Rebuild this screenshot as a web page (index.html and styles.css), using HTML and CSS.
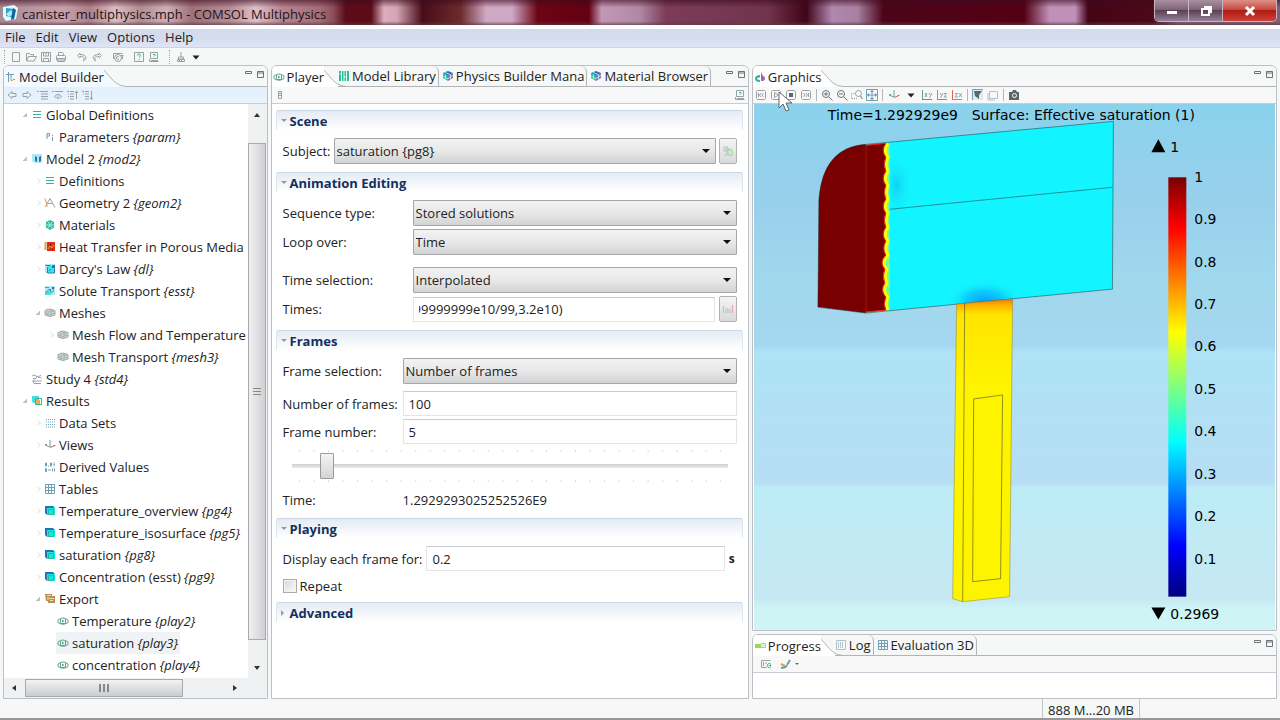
FILE: index.html
```html
<!DOCTYPE html>
<html lang="en">
<head>
    <meta charset="utf-8">
    <title>canister_multiphysics.mph - COMSOL Multiphysics</title>
    <link rel="stylesheet" href="styles.css">
</head>
<body>
    <!-- Icon set -->
    <svg class="sprite" aria-hidden="true">
        <symbol id="i-new" viewBox="0 0 12 12"><path d="M2.500 1.500h7v9h-7z"/></symbol>
        <symbol id="i-open" viewBox="0 0 12 12"><path d="M1.500 10V2.500h3l1 1h3v2M1.500 10l2-4.500h8l-2.500 4.500z"/></symbol>
        <symbol id="i-save" viewBox="0 0 12 12"><path d="M1.500 1.500h9v9h-9zM3.500 1.500v3.500h5v-3.500M3.500 10.500v-3h5v3M6 2v2"/></symbol>
        <symbol id="i-print" viewBox="0 0 12 12"><path d="M3.500 5V1.500h4l1 1V5M1.500 5.500q0-1 1-1h7q1 0 1 1v3.500h-9zM2.500 9v1.500h7V9M1.500 7.500h9"/></symbol>
        <symbol id="i-undo" viewBox="0 0 12 12"><path d="M4 2L1.500 4.500 4 7V5.500c4-.5 5 1 3.500 4.500 4-3 3-6.500-3.500-6.500z"/></symbol>
        <symbol id="i-redo" viewBox="0 0 12 12"><path d="M8 2l2.500 2.500L8 7V5.500c-4-.5-5 1-3.500 4.500-4-3-3-6.500 3.500-6.500z"/></symbol>
        <symbol id="i-refresh" viewBox="0 0 12 12"><path d="M1.500 8V2.500h9M8.500 4.500h3M10.500 4v4"/><circle cx="6" cy="7" r="3.500"/><path d="M7 6a1.500 1.500 0 1 0 0 2"/></symbol>
        <symbol id="i-help" viewBox="0 0 12 12"><path d="M1.500 1.500h9v9h-9z"/><path class="teal" d="M4.500 4.500q0-1.500 1.500-1.500t1.500 1.500q0 1-1.500 2M6 8v1"/></symbol>
        <symbol id="i-doc" viewBox="0 0 12 12"><path d="M2.500 1.500h7v6h-7zM1.500 8v2.500h9M3 9.500h7"/><path class="teal" d="M5 3.500h2v1L6 5.500"/></symbol>
        <symbol id="i-brush" viewBox="0 0 12 12"><path d="M6 1v5M3.500 6h5v2h-5zM2.500 8.500h7v2h-7zM4.500 8.500v1.500M6.500 8.500v1.500"/></symbol>
        <symbol id="i-caret" viewBox="0 0 12 12"><path class="black" d="M2.500 4.500h7L6 8.500z"/></symbol>
        <symbol id="i-back" viewBox="0 0 12 12"><path d="M6 2.500L2 6l4 3.500V7.500h4v-3H6z"/></symbol>
        <symbol id="i-fwd" viewBox="0 0 12 12"><path d="M6 2.500L10 6 6 9.500V7.500H2v-3h4z"/></symbol>
        <symbol id="i-list" viewBox="0 0 12 12"><path d="M1 2.500h2M4 2.500h8M5 5h7M5 7.500h7M5 10h7"/></symbol>
        <symbol id="i-show" viewBox="0 0 12 12"><path d="M1 2.500h2M4 2.500h8M3.500 7.500q3.500-4 7 0-3.500 3.500-7 0zM7 6.500v2"/></symbol>
        <symbol id="i-up" viewBox="0 0 12 12"><path d="M1 2.500h2M4 2.500h4M2 5h1M4 5h4M2 7.500h1M4 7.500h4M4 10h4M10.500 10V2.500M9 4l1.500-2L12 4"/></symbol>
        <symbol id="i-down" viewBox="0 0 12 12"><path d="M1 2.500h2M4 2.500h4M2 5h1M4 5h4M4 7.500h4M4 10h4M10.500 2v8M9 8.500l1.500 2L12 8.500"/></symbol>
        <symbol id="i-builder" viewBox="0 0 12 12"><path class="steel" d="M3.500 1v10M1 3.500h8M6 3.500v6M8 8.500h2"/><path class="orange" d="M6 9.500h2"/></symbol>
        <symbol id="i-play" viewBox="0 0 12 12"><path class="green" d="M1 5q5-4 10 0M1 5v2.500q5 3.500 10 0V5M3.500 4v4.500h5V4"/><path class="green-fill" d="M5 4.500v3L7.500 6z"/></symbol>
        <symbol id="i-library" viewBox="0 0 12 12"><path class="teal-fill" d="M1 1h10v10H1z"/><path class="white" d="M3.500 1v10M6 1v10M8.500 1v10M1.500 4h1.500M6.500 7h1.500"/></symbol>
        <symbol id="i-physics" viewBox="0 0 12 12"><path class="teal-fill" d="M6 6L1 3v5l5 3z"/><path class="pink-fill" d="M6 6l5-3v5l-5 3z"/><path class="blue-fill" d="M1 3l5-2 5 2-5 3z"/><path class="mint" d="M3.500 4.500v5M1 6l5 3M3 2.500l5 2M8.500 4.500v5M11 5.500l-5 3"/></symbol>
        <symbol id="i-graphics" viewBox="0 0 12 12"><path class="teal-fill" d="M6 4Q1 4 1 7.500T6 11V9Q3 8.500 3 7.500T6 6.500z"/><path class="pink-fill" d="M7 1v9q4 0 4-2.500T9 5z"/></symbol>
        <symbol id="i-equations" viewBox="0 0 12 12"><path class="teal" d="M2 2.500h8M2 5.500h8M2 8.500h8"/></symbol>
        <symbol id="i-param" viewBox="0 0 12 12"><path class="steel" d="M3 8V2.500h2.500v2.500H3M8.500 6v4M8.500 4v1"/></symbol>
        <symbol id="i-model" viewBox="0 0 12 12"><path class="ice-fill" d="M1 1h10v9H3L1 8z"/><path class="blue-fill" d="M4 3l2 1v5L4 8zM8 4l2-1v5L8 9z"/></symbol>
        <symbol id="i-geometry" viewBox="0 0 12 12"><path d="M1 10L6 1.500l5 9M3.500 6.500h5"/><path class="orange" d="M1 1.500l2.500 8"/></symbol>
        <symbol id="i-materials" viewBox="0 0 12 12"><path class="teal-fill" d="M6 1l4 2v5.500L6 11 2 8.500V3z"/><path class="mint" d="M1 6h10M4 3l4 6M8 3L4 9"/></symbol>
        <symbol id="i-heat" viewBox="0 0 12 12"><path class="red-fill" d="M3 1h8v9H3z"/><path class="orange thick" d="M1.500 1v8"/><path class="orange" d="M4 8l2-3 2 2 2-3"/><path class="black" d="M6 3h1v1H6zM8 8h1v1H8z"/></symbol>
        <symbol id="i-darcy" viewBox="0 0 12 12"><path class="ice-fill" d="M1 1h10v9H1z"/><path class="cyan-fill" d="M4 3h6v7H4z"/><path class="blue" d="M1.500 2.500h5M3.500 4v6h7V2M5 8l2-2"/><path class="blue-fill" d="M8 2h2v3H8z"/></symbol>
        <symbol id="i-solute" viewBox="0 0 12 12"><path class="ice-fill" d="M1 1h10v9H1z"/><path class="cyan-fill" d="M1 6h6v4H1z"/><path class="teal" d="M2 8l3-4 3 4 2-4M1 2.500h4"/><path class="blue-fill" d="M8 2h2v2H8zM6 4h1v2H6z"/></symbol>
        <symbol id="i-mesh" viewBox="0 0 12 12"><path class="mesh" d="M1 3.500Q6 .500 11 3.500V8q-5 3-10 0zM1 3.500q5 3 10 0M4 5v4M7 5v4M3 2l6 2.500M1 6q5 2.500 10 0"/></symbol>
        <symbol id="i-study" viewBox="0 0 12 12"><path d="M1 3q2-2 4 0t5-1M2 5.500h3l1-2M7 4.500q3-1 4 1M1.500 8h9M3 6.500q-2 3 0 4h7"/></symbol>
        <symbol id="i-results" viewBox="0 0 12 12"><path class="cyan-fill" d="M1 1h7v7H3L1 7z"/><path class="orange-fill" d="M5 5h4v4H5z"/><path class="teal" d="M4.500 3.500h6v6h-6z"/></symbol>
        <symbol id="i-data" viewBox="0 0 12 12"><path class="steel dots" d="M2 2.500h9M2 5h9M2 7.500h9M2 10h9"/></symbol>
        <symbol id="i-axes" viewBox="0 0 12 12"><path class="steel" d="M6 1v7"/><path class="green" d="M6 8L1 6M1 5.500h2"/><path class="red" d="M6 8.500l5-2M9.500 6.500h2"/></symbol>
        <symbol id="i-derived" viewBox="0 0 12 12"><path class="steel" d="M1.500 2h1v3h-1zM4 5h1M6.500 2h1v3h-1zM9.500 2h1.500M9.500 3.500h1.500M9.500 5h1M1.500 7.500h1v3h-1zM4 9h3M8.500 7.500v3M10.500 7.500v3"/></symbol>
        <symbol id="i-table" viewBox="0 0 12 12"><path class="steel" d="M1.500 1.500h9v9h-9zM1.500 4.500h9M1.500 7.500h9M4.500 1.500v9M7.500 1.500v9"/></symbol>
        <symbol id="i-plot" viewBox="0 0 12 12"><path class="blue-fill" d="M1 1h8l2 2H3v7L1 8z"/><path class="bright-fill" d="M3 3h8v7H3z"/><path class="teal" d="M4.500 9.500V4.500h5v5z"/></symbol>
        <symbol id="i-export" viewBox="0 0 12 12"><path class="brown-fill" d="M1 1h7v2h3v7H4V8H2z"/><path class="sand" d="M3 2.500h4M5 5.500h5M6 7.500h3M4 4v3"/></symbol>
        <symbol id="i-first" viewBox="0 0 12 12"><path d="M2.500 1.500h7l1 1v7l-1 1h-7l-1-1v-7zM3.500 4v4M6 4L4.500 6 6 8M8.500 4L7 6l1.500 2"/></symbol>
        <symbol id="i-run" viewBox="0 0 12 12"><path d="M2.500 1.500h7l1 1v7l-1 1h-7l-1-1v-7zM4.500 3.500v5L8.500 6z"/></symbol>
        <symbol id="i-stop" viewBox="0 0 12 12"><path d="M2.500 1.500h7l1 1v7l-1 1h-7l-1-1v-7z"/><path class="dark-fill" d="M4 4h4v4H4z"/></symbol>
        <symbol id="i-last" viewBox="0 0 12 12"><path d="M2.500 1.500h7l1 1v7l-1 1h-7l-1-1v-7zM8.500 4v4M6 4l1.500 2L6 8M3.500 4L5 6 3.500 8"/></symbol>
        <symbol id="i-zoomin" viewBox="0 0 12 12"><circle class="ink" cx="5" cy="5" r="3.500"/><path class="ink" d="M8 8l3.500 3.500M3 5h4M5 3v4"/></symbol>
        <symbol id="i-zoomout" viewBox="0 0 12 12"><circle class="ink" cx="5" cy="5" r="3.500"/><path class="ink" d="M8 8l3.500 3.500M3 5h4"/></symbol>
        <symbol id="i-zoombox" viewBox="0 0 12 12"><path class="dots" d="M.500 9.500v-5h4M1 9.500h5"/><circle cx="7.500" cy="4.500" r="3"/><path class="ink" d="M9.500 7l2 3"/></symbol>
        <symbol id="i-extents" viewBox="0 0 12 12"><path class="steel" d="M.500 .500h11v11H.500z"/><path class="steel-fill" d="M6 1l2 2H4zM6 11l2-2H4zM1 6l2-2v4zM11 6L9 4v4z"/><path class="steel" d="M6 2v8M2 6h8"/></symbol>
        <symbol id="i-xy" viewBox="0 0 12 12"><path class="green" d="M1.500 1v9"/><path class="red" d="M1 10.500h10"/><path d="M4 4l2 4M6 4L4 8M8 4l1 2M11 4L8.500 9"/></symbol>
        <symbol id="i-yz" viewBox="0 0 12 12"><path class="steel" d="M1.500 1v9"/><path class="green" d="M1 10.500h10"/><path d="M4 4l1 2M7 4L4.500 9M8 4.500h2.500L8 8h3"/></symbol>
        <symbol id="i-zx" viewBox="0 0 12 12"><path class="red" d="M1.500 1v9"/><path class="steel" d="M1 10.500h10"/><path d="M4 4.500h2.500L4 8h3M8 4l3 4M11 4L8 8"/></symbol>
        <symbol id="i-light" viewBox="0 0 12 12"><path class="pale-fill" d="M1 1h10v10H1z"/><path class="dark-fill" d="M2 2h8L7 6v4L3 7z"/><path class="steel" d="M.500 11V.500H11"/></symbol>
        <symbol id="i-select" viewBox="0 0 12 12"><path class="faint" d="M2.500 2.500h8v7h-8zM1 4v7h7"/></symbol>
        <symbol id="i-camera" viewBox="0 0 12 12"><path class="dark-fill" d="M1 3h3l1-2h3l1 2h2v8H1z"/><circle class="white" cx="6.500" cy="6.500" r="2"/></symbol>
        <symbol id="i-progress" viewBox="0 0 12 12"><path class="pale-fill" d="M1 4h10v4H1z"/><path class="lime-fill" d="M1 4h6v4H1z"/><path class="faint" d="M7 3.500h4.500v4H7"/></symbol>
        <symbol id="i-log" viewBox="0 0 12 12"><path class="faint" d="M1.500 1.500h9v9h-9z"/><path class="steel dots" d="M3 4h6M3 6h6M3 8h6"/></symbol>
        <symbol id="i-cells" viewBox="0 0 12 12"><path d="M1.500 2.500h9M1.500 2.500v7h5M3.500 4v4M5 5h2"/><path class="teal" d="M11 6.500a2 2 0 1 0 0 2M9 7.500h2"/></symbol>
        <symbol id="i-paint" viewBox="0 0 12 12"><path class="orange thick" d="M1 6l4 2"/><path class="green thick" d="M1 9.500q4 1 6-2"/><path class="steel thick" d="M7 7l3-5"/></symbol>
        <symbol id="i-small" viewBox="0 0 12 12"><path d="M4.500 2.500h3v7h-3zM5 4.500h2M5 6.500h2"/></symbol>
        <symbol id="i-goto" viewBox="0 0 12 12"><path class="faint" d="M1 2h5M1 4h5M1 6h4M2 10h3V2"/><path class="lime" d="M6 5h4v5H6zM7 5V3"/></symbol>
        <symbol id="i-range" viewBox="0 0 12 12"><path class="lime" d="M1.500 3v7"/><path class="faint" d="M4 10V6h2v4M8 10V6"/><path class="rose" d="M10.500 2v8"/></symbol>
        <symbol id="i-min" viewBox="0 0 12 12"><path class="ink" d="M2.500 2.500h6v2h-6z"/></symbol>
        <symbol id="i-max" viewBox="0 0 12 12"><path class="ink" d="M2.500 2.500h6v6h-6zM2.500 4h6"/></symbol>
        <symbol id="i-curve" viewBox="0 0 30 21"><path class="tab-fill" d="M0 0C12 2 15 20 30 20.500V21H0z"/><path class="tab-line" d="M0 0C12 2 15 20 30 20.500"/></symbol>
    </svg>

    <header class="titlebar">
        <svg class="app-icon" viewBox="0 0 16 16"><path fill="#e8f6fa" d="M1 2l11-2 4 3-2 11-10 2-3-4z"/><path fill="#20a8d8" d="M4 3l9 1-1 9-8-2z"/><path fill="#b8e8e0" d="M4 9l5-4 2 4-4 3z"/><path fill="#1660a8" d="M11 3l3 2-2 9-3 1z"/></svg>
        <h1 class="title">canister_multiphysics.mph - COMSOL Multiphysics</h1>
        <div class="window-buttons">
            <button aria-label="Minimize"><svg viewBox="0 0 14 12"><path fill="#fff" d="M2 6h10v3H2z"/></svg></button>
            <button aria-label="Restore"><svg viewBox="0 0 14 12"><path fill="none" stroke="#fff" stroke-width="2" d="M3 4h7v6H3zM5 2h7v6"/></svg></button>
            <button class="close" aria-label="Close"><svg viewBox="0 0 14 12"><path stroke="#fff" stroke-width="3" d="M3 2l8 8M11 2l-8 8"/></svg></button>
        </div>
    </header>

    <nav class="menubar">
        <button>File</button>
        <button>Edit</button>
        <button>View</button>
        <button>Options</button>
        <button>Help</button>
    </nav>

    <div class="toolbar main-toolbar">
        <i class="grip"></i>
        <button aria-label="New"><svg><use href="#i-new"/></svg></button>
        <button aria-label="Open"><svg><use href="#i-open"/></svg></button>
        <button aria-label="Save"><svg><use href="#i-save"/></svg></button>
        <button aria-label="Print"><svg><use href="#i-print"/></svg></button>
        <button class="group" aria-label="Undo"><svg><use href="#i-undo"/></svg></button>
        <button aria-label="Redo"><svg><use href="#i-redo"/></svg></button>
        <button class="group" aria-label="Update"><svg><use href="#i-refresh"/></svg></button>
        <button class="group" aria-label="Help"><svg><use href="#i-help"/></svg></button>
        <button aria-label="Documentation"><svg><use href="#i-doc"/></svg></button>
        <i class="grip group"></i>
        <button aria-label="Clear"><svg><use href="#i-brush"/></svg></button>
        <button aria-label="Clear options"><svg><use href="#i-caret"/></svg></button>
    </div>

    <main class="workspace">
        <section class="panel builder">
            <div class="tabs">
                <button class="tab active"><svg><use href="#i-builder"/></svg>Model Builder</button>
                <svg class="curve"><use href="#i-curve"/></svg>
                <div class="strip">
                    <button aria-label="Minimize view"><svg><use href="#i-min"/></svg></button>
                    <button aria-label="Maximize view"><svg><use href="#i-max"/></svg></button>
                </div>
            </div>
            <div class="toolbar">
                <button aria-label="Previous"><svg><use href="#i-back"/></svg></button>
                <button aria-label="Next"><svg><use href="#i-fwd"/></svg></button>
                <button aria-label="Collapse"><svg><use href="#i-list"/></svg></button>
                <button aria-label="Show"><svg><use href="#i-show"/></svg></button>
                <button aria-label="Move up"><svg><use href="#i-up"/></svg></button>
                <button aria-label="Move down"><svg><use href="#i-down"/></svg></button>
            </div>
            <div class="tree-area">
                <ul class="tree">
                    <li><a href="#" class="open"><svg><use href="#i-equations"/></svg>Global Definitions</a>
                        <ul>
                            <li><a href="#"><svg><use href="#i-param"/></svg>Parameters <em>{param}</em></a></li>
                        </ul>
                    </li>
                    <li><a href="#" class="open"><svg><use href="#i-model"/></svg>Model 2 <em>{mod2}</em></a>
                        <ul>
                            <li><a href="#" class="shut"><svg><use href="#i-equations"/></svg>Definitions</a></li>
                            <li><a href="#" class="shut"><svg><use href="#i-geometry"/></svg>Geometry 2 <em>{geom2}</em></a></li>
                            <li><a href="#" class="shut"><svg><use href="#i-materials"/></svg>Materials</a></li>
                            <li><a href="#" class="shut"><svg><use href="#i-heat"/></svg>Heat Transfer in Porous Media</a></li>
                            <li><a href="#" class="shut"><svg><use href="#i-darcy"/></svg>Darcy's Law <em>{dl}</em></a></li>
                            <li><a href="#"><svg><use href="#i-solute"/></svg>Solute Transport <em>{esst}</em></a></li>
                            <li><a href="#" class="open"><svg><use href="#i-mesh"/></svg>Meshes</a>
                                <ul>
                                    <li><a href="#" class="shut"><svg><use href="#i-mesh"/></svg>Mesh Flow and Temperature</a></li>
                                    <li><a href="#"><svg><use href="#i-mesh"/></svg>Mesh Transport <em>{mesh3}</em></a></li>
                                </ul>
                            </li>
                        </ul>
                    </li>
                    <li><a href="#"><svg><use href="#i-study"/></svg>Study 4 <em>{std4}</em></a></li>
                    <li><a href="#" class="open"><svg><use href="#i-results"/></svg>Results</a>
                        <ul>
                            <li><a href="#" class="shut"><svg><use href="#i-data"/></svg>Data Sets</a></li>
                            <li><a href="#" class="shut"><svg><use href="#i-axes"/></svg>Views</a></li>
                            <li><a href="#"><svg><use href="#i-derived"/></svg>Derived Values</a></li>
                            <li><a href="#" class="shut"><svg><use href="#i-table"/></svg>Tables</a></li>
                            <li><a href="#" class="shut"><svg><use href="#i-plot"/></svg>Temperature_overview <em>{pg4}</em></a></li>
                            <li><a href="#" class="shut"><svg><use href="#i-plot"/></svg>Temperature_isosurface <em>{pg5}</em></a></li>
                            <li><a href="#" class="shut"><svg><use href="#i-plot"/></svg>saturation <em>{pg8}</em></a></li>
                            <li><a href="#" class="shut"><svg><use href="#i-plot"/></svg>Concentration (esst) <em>{pg9}</em></a></li>
                            <li><a href="#" class="open"><svg><use href="#i-export"/></svg>Export</a>
                                <ul>
                                    <li><a href="#"><svg><use href="#i-play"/></svg>Temperature <em>{play2}</em></a></li>
                                    <li><a href="#" class="selected"><svg><use href="#i-play"/></svg>saturation <em>{play3}</em></a></li>
                                    <li><a href="#"><svg><use href="#i-play"/></svg>concentration <em>{play4}</em></a></li>
                                </ul>
                            </li>
                        </ul>
                    </li>
                </ul>
                <div class="scroll vertical">
                    <svg viewBox="0 0 8 8"><path d="M1 6h6L4 2z"/></svg>
                    <div class="thumb"></div>
                    <svg viewBox="0 0 8 8"><path d="M1 2h6L4 6z"/></svg>
                </div>
                <div class="scroll horizontal">
                    <svg viewBox="0 0 8 8"><path d="M6 1v6L2 4z"/></svg>
                    <div class="thumb"></div>
                    <svg viewBox="0 0 8 8"><path d="M2 1v6l4-3z"/></svg>
                </div>
            </div>
        </section>

        <section class="panel player">
            <div class="tabs">
                <button class="tab active"><svg><use href="#i-play"/></svg>Player</button>
                <svg class="curve"><use href="#i-curve"/></svg>
                <button class="tab"><svg><use href="#i-library"/></svg>Model Library</button>
                <button class="tab"><svg><use href="#i-physics"/></svg>Physics Builder Mana</button>
                <button class="tab"><svg><use href="#i-physics"/></svg>Material Browser</button>
                <div class="strip">
                    <button aria-label="Minimize view"><svg><use href="#i-min"/></svg></button>
                    <button aria-label="Maximize view"><svg><use href="#i-max"/></svg></button>
                </div>
            </div>
            <div class="toolbar split">
                <button aria-label="Generate frame"><svg><use href="#i-small"/></svg></button>
                <button aria-label="Help"><svg><use href="#i-doc"/></svg></button>
            </div>
            <form class="settings">
                <h2>Scene</h2>
                <div class="row scene">
                    <label for="subject">Subject:</label>
                    <span class="select"><select id="subject"><option>saturation {pg8}</option></select></span>
                    <button type="button" class="side" aria-label="Go to source"><svg><use href="#i-goto"/></svg></button>
                </div>

                <h2>Animation Editing</h2>
                <div class="row wide">
                    <label for="sequence">Sequence type:</label>
                    <span class="select"><select id="sequence"><option>Stored solutions</option></select></span>
                </div>
                <div class="row wide">
                    <label for="loop">Loop over:</label>
                    <span class="select"><select id="loop"><option>Time</option></select></span>
                </div>
                <div class="row wide spaced">
                    <label for="timesel">Time selection:</label>
                    <span class="select"><select id="timesel"><option>Interpolated</option></select></span>
                </div>
                <div class="row wide">
                    <label for="times">Times:</label>
                    <input type="text" id="times" class="clipped" value="99999999e10/99,3.2e10)">
                    <button type="button" class="side" aria-label="Range"><svg><use href="#i-range"/></svg></button>
                </div>

                <h2>Frames</h2>
                <div class="row">
                    <label for="framesel">Frame selection:</label>
                    <span class="select"><select id="framesel"><option>Number of frames</option></select></span>
                </div>
                <div class="row number">
                    <label for="count">Number of frames:</label>
                    <input type="text" id="count" value="100">
                </div>
                <div class="row">
                    <label for="frame">Frame number:</label>
                    <input type="text" id="frame" value="5">
                </div>
                <div class="slider">
                    <svg class="ticks"><line x1="0" y1="1" x2="100%" y2="1" pathLength="407"/></svg>
                    <input type="range" min="0" max="73" value="5" aria-label="Frame number">
                    <svg class="ticks"><line x1="0" y1="1" x2="100%" y2="1" pathLength="407"/></svg>
                </div>
                <div class="row time">
                    <label for="time">Time:</label>
                    <output id="time">1.2929293025252526E9</output>
                </div>

                <h2>Playing</h2>
                <div class="row display">
                    <label for="duration">Display each frame for:</label>
                    <input type="text" id="duration" value="0.2">
                    <b>s</b>
                </div>
                <div class="check">
                    <input type="checkbox" id="repeat">
                    <label for="repeat">Repeat</label>
                </div>

                <h2 class="collapsed">Advanced</h2>
            </form>
        </section>

        <div class="right">
            <section class="panel graphics">
                <div class="tabs">
                    <button class="tab active"><svg><use href="#i-graphics"/></svg>Graphics</button>
                    <svg class="curve"><use href="#i-curve"/></svg>
                    <div class="strip">
                        <button aria-label="Minimize view"><svg><use href="#i-min"/></svg></button>
                        <button aria-label="Maximize view"><svg><use href="#i-max"/></svg></button>
                    </div>
                </div>
                <div class="toolbar">
                    <button aria-label="First frame"><svg><use href="#i-first"/></svg></button>
                    <button class="hovered" aria-label="Play"><svg><use href="#i-run"/></svg>
                        <svg class="cursor" viewBox="0 0 16 22"><path d="M1 1v16l4-4 3 7 3-1-3-7h6z"/></svg>
                    </button>
                    <button aria-label="Stop"><svg><use href="#i-stop"/></svg></button>
                    <button aria-label="Last frame"><svg><use href="#i-last"/></svg></button>
                    <i class="sep"></i>
                    <button aria-label="Zoom in"><svg><use href="#i-zoomin"/></svg></button>
                    <button aria-label="Zoom out"><svg><use href="#i-zoomout"/></svg></button>
                    <button aria-label="Zoom box"><svg><use href="#i-zoombox"/></svg></button>
                    <button aria-label="Zoom extents"><svg><use href="#i-extents"/></svg></button>
                    <i class="sep"></i>
                    <button class="wide-icon" aria-label="Default view"><svg><use href="#i-axes"/></svg></button>
                    <button class="wide-icon" aria-label="View options"><svg><use href="#i-caret"/></svg></button>
                    <button aria-label="XY view"><svg><use href="#i-xy"/></svg></button>
                    <button aria-label="YZ view"><svg><use href="#i-yz"/></svg></button>
                    <button aria-label="ZX view"><svg><use href="#i-zx"/></svg></button>
                    <i class="sep"></i>
                    <button aria-label="Scene light"><svg><use href="#i-light"/></svg></button>
                    <button aria-label="Transparency"><svg><use href="#i-select"/></svg></button>
                    <i class="sep"></i>
                    <button aria-label="Snapshot"><svg><use href="#i-camera"/></svg></button>
                </div>
                <div class="canvas">
                    <svg class="plot" viewBox="754 104 522 526">
                        <defs>
                            <linearGradient id="jet" x1="0" y1="0" x2="0" y2="1">
                                <stop offset="0" stop-color="#7a0000"/>
                                <stop offset=".12" stop-color="#f00"/>
                                <stop offset=".37" stop-color="#ff0"/>
                                <stop offset=".5" stop-color="#7fff7f"/>
                                <stop offset=".63" stop-color="#0ff"/>
                                <stop offset=".88" stop-color="#00f"/>
                                <stop offset="1" stop-color="#000080"/>
                            </linearGradient>
                            <linearGradient id="stick" x1="0" y1="0" x2="0" y2="1">
                                <stop offset="0" stop-color="#f07800"/>
                                <stop offset=".02" stop-color="#ffb000"/>
                                <stop offset=".05" stop-color="#ffe400"/>
                                <stop offset=".3" stop-color="#fff400"/>
                            </linearGradient>
                            <radialGradient id="cool">
                                <stop offset="0" stop-color="#0a98f8"/>
                                <stop offset=".5" stop-color="#0cb8fc" stop-opacity=".7"/>
                                <stop offset="1" stop-color="#12f4ff" stop-opacity="0"/>
                            </radialGradient>
                            <radialGradient id="tint">
                                <stop offset="0" stop-color="#10d0f4"/>
                                <stop offset="1" stop-color="#12f4ff" stop-opacity="0"/>
                            </radialGradient>
                            <clipPath id="block"><path d="M886 142l228-21-1 168-227 22z"/></clipPath>
                            <filter id="soft" x="-1" width="3"><feGaussianBlur stdDeviation="1"/></filter>
                        </defs>
                        <path fill="#12f4ff" d="M886 142l228-21-1 168-227 22z"/>
                        <g clip-path="url(#block)">
                            <ellipse cx="985" cy="302" rx="38" ry="22" fill="url(#cool)"/>
                            <ellipse cx="897" cy="185" rx="16" ry="32" fill="url(#tint)"/>
                        </g>
                        <path fill="none" stroke="#9f6" stroke-width="3" filter="url(#soft)" d="M889 143q-2 7 0 14-2 7 0 14-2 7 0 14-2 7 0 14-2 7 0 14-2 7 0 14-2 7 0 14-2 7 0 14-2 7 0 14-2 7 0 14-2 7 0 14-2 7 0 14"/>
                        <path fill="none" stroke="#ff0" stroke-width="3" d="M888 143q-5 7 0 14-3 7 0 14-5 7 0 14-3 7 0 14-5 7 0 14-3 7 0 14-5 7 0 14-4 7 0 14-7 7-1 14-3 7 0 14-5 7 1 14-3 7 0 13"/>
                        <path fill="#780000" stroke="#f42000" stroke-width="1" d="M866 145l20-2q-5 7 0 14-3 7 0 14-5 7 0 14-3 7 0 14-5 7 0 14-3 7 0 14-5 7 0 14-4 7 0 14-7 7-1 14-3 7 0 14-5 7 1 14-3 7 0 13l-20 2z"/>
                        <path fill="#780000" d="M818 307l1-108q4-52 47-55v169z"/>
                        <path class="edge" d="M818 307l1-108q4-52 47-55l248-23-1 168-227 22-20 2zM866 146v163M890 209l223-22"/>
                        <path fill="url(#stick)" stroke="#8a8420" stroke-width=".5" d="M957 304l56-5-3 298-47 5-10-3z"/>
                        <path class="edge" d="M965 303l-2 299M974 399l29-4-2 184-28 3z"/>
                        <g class="plot-text">
                            <text x="828" y="120">Time=1.292929e9</text>
                            <text x="972" y="120">Surface: Effective saturation (1)</text>
                            <path d="M1159 139l7 13h-14zM1159 620l7-12h-14z"/>
                            <text x="1171" y="152">1</text>
                            <rect x="1169" y="177" width="18" height="420" fill="url(#jet)"/>
                            <text x="1195" y="182">1</text>
                            <text x="1195" y="224">0.9</text>
                            <text x="1195" y="267">0.8</text>
                            <text x="1195" y="309">0.7</text>
                            <text x="1195" y="351">0.6</text>
                            <text x="1195" y="394">0.5</text>
                            <text x="1195" y="436">0.4</text>
                            <text x="1195" y="479">0.3</text>
                            <text x="1195" y="521">0.2</text>
                            <text x="1195" y="564">0.1</text>
                            <text x="1171" y="619">0.2969</text>
                        </g>
                    </svg>
                </div>
            </section>

            <section class="panel progress">
                <div class="tabs">
                    <button class="tab active"><svg><use href="#i-progress"/></svg>Progress</button>
                    <svg class="curve"><use href="#i-curve"/></svg>
                    <button class="tab"><svg><use href="#i-log"/></svg>Log</button>
                    <button class="tab"><svg><use href="#i-table"/></svg>Evaluation 3D</button>
                    <div class="strip">
                        <button aria-label="Minimize view"><svg><use href="#i-min"/></svg></button>
                        <button aria-label="Maximize view"><svg><use href="#i-max"/></svg></button>
                    </div>
                </div>
                <div class="toolbar">
                    <button aria-label="Table"><svg><use href="#i-cells"/></svg></button>
                    <button class="group" aria-label="Clear"><svg><use href="#i-paint"/></svg></button>
                    <i class="mini-caret"></i>
                </div>
            </section>
        </div>
    </main>

    <footer class="statusbar">
        <span>888 M...20 MB</span>
    </footer>
</body>
</html>
```
FILE: styles.css
```css
*, *::before {
    box-sizing: border-box;
}

body {
    margin: 0;
    height: 100vh;
    display: flex;
    flex-direction: column;
    background: #f6f7f7;
    border-bottom: 2px solid #9a979a;
    color: #222;
    font-family: "Open Sans", "Noto Sans", sans-serif;
    font-size: 13px;
    line-height: 20px;
    overflow: hidden;
}

button {
    margin: 0;
    padding: 0;
    border: none;
    background: none;
    font: inherit;
    color: inherit;
}

select, input {
    font: inherit;
    color: inherit;
}

svg {
    display: block;
    flex-shrink: 0;
}

.sprite {
    position: absolute;
    width: 0;
    height: 0;
}

/* Icon colours */
symbol path, symbol circle {
    fill: none;
    stroke: #9aa1a5;
    stroke-width: 1;
}

symbol .ink { stroke: #6a7478; }
symbol .teal { stroke: #2fb59a; }
symbol .mint { stroke: #a8ece0; }
symbol .blue { stroke: #2c80b0; }
symbol .steel { stroke: #6f9fb4; }
symbol .green { stroke: #62a386; }
symbol .red { stroke: #e0604c; }
symbol .orange { stroke: #e8a040; }
symbol .white { stroke: #e8fff8; }
symbol .sand { stroke: #f0dcae; }
symbol .faint { stroke: #b4c2c8; }
symbol .lime { stroke: #8cdc8c; }
symbol .rose { stroke: #e8a0b0; }
symbol .thick { stroke-width: 2; }
symbol .dots { stroke-dasharray: 1 1; }
symbol .mesh { fill: #d4dcda; stroke: #9cacaa; }
symbol .teal-fill { fill: #2cbc9c; stroke: none; }
symbol .pink-fill { fill: #a860b8; stroke: none; }
symbol .blue-fill { fill: #2474b4; stroke: none; }
symbol .cyan-fill { fill: #40e0e8; stroke: none; }
symbol .bright-fill { fill: #10e8e0; stroke: none; }
symbol .ice-fill { fill: #b4e6f4; stroke: none; }
symbol .red-fill { fill: #e02c14; stroke: none; }
symbol .orange-fill { fill: #f0a840; stroke: none; }
symbol .brown-fill { fill: #b89058; stroke: none; }
symbol .green-fill { fill: #52a880; stroke: none; }
symbol .steel-fill { fill: #4c88a8; stroke: none; }
symbol .dark-fill { fill: #5c686c; stroke: none; }
symbol .pale-fill { fill: #dcecf4; stroke: none; }
symbol .lime-fill { fill: #9cd858; stroke: none; }
symbol .black { fill: #222; stroke: none; }
symbol .tab-fill { fill: var(--tab); stroke: none; }
symbol .tab-line { stroke: #b2b5b8; }

/* Title bar */
.titlebar {
    display: flex;
    align-items: center;
    height: 25px;
    padding-left: 2px;
    background:
        linear-gradient(180deg, rgba(60, 10, 30, 0.6), transparent 30%, transparent 85%, rgba(90, 60, 70, 0.7)),
        linear-gradient(90deg, #a88b98 0%, #c9a0aa 5%, #ac8088 7%, #dcbcc2 9%, #b28c92 11%, #cfb0b6 13%, #9e7078 15%, #b88c96 18%, #dcc0c8 20%, #b88490 22%, #a46c78 25%, #8c505c 26%, #5c0c18 27%, #5c0c18 29%, #dcaec0 30%, #d4a4b4 31%, #480c18 33%, #6c2c2c 36%, #cfa8c4 38%, #cfa8c4 40%, #6c0414 42%, #640010 46%, #c498b4 47%, #b088a4 50%, #7c3c58 52%, #70344c 60%, #400418 63%, #b088b0 65%, #a880a0 67%, #4c0418 69%, #540014 80%, #c090b8 82%, #c090b8 84%, #440414 85%, #4c0818 90%, #806078 92%);
}

.app-icon {
    width: 16px;
    height: 16px;
}

.title {
    margin: 0 auto 0 4px;
    padding-top: 2px;
    font-size: 13px;
    font-weight: 400;
    color: #221418;
}

.window-buttons {
    display: flex;
    align-self: flex-start;
    height: 22px;
    margin-right: 3px;
    border: 1px solid #c8b4c0;
    border-top: none;
    border-radius: 0 0 5px 5px;
    overflow: hidden;
}

.window-buttons button {
    display: grid;
    place-items: center;
    width: 34px;
    border-right: 1px solid #c8b4c0;
    background: linear-gradient(#a890a0, #806478 45%, #5c4054 50%, #94809c);
}

.window-buttons .close {
    width: 53px;
    border-right: none;
    background: linear-gradient(#dc9088, #c84c40 45%, #b01c14 50%, #cc4038);
}

.window-buttons svg {
    width: 14px;
    height: 12px;
}

/* Menu and toolbars */
.menubar {
    display: flex;
    align-items: flex-start;
    gap: 10px;
    height: 23px;
    padding-left: 5px;
    border-top: 4px solid #fff;
    border-bottom: 1px solid #d0d4e0;
    background: linear-gradient(#d4dcec 50%, #e0e4f8);
}

.menubar button {
    line-height: 16px;
}

.toolbar {
    display: flex;
    align-items: center;
    gap: 3px;
    height: 17px;
}

.toolbar button, .strip button {
    width: 12px;
    height: 12px;
}

.toolbar svg, .strip svg, .tab > svg {
    width: 12px;
    height: 12px;
}

.main-toolbar {
    padding-left: 4px;
}

.main-toolbar .group {
    margin-left: 6px;
}

.grip {
    width: 1px;
    height: 14px;
    margin-right: 2px;
    border-left: 1px dotted #aaa;
}

.sep {
    width: 1px;
    height: 12px;
    margin: 0 1px;
    background: #b4b8bc;
}

.toolbar .wide-icon {
    width: 14px;
    padding: 0 1px;
}

/* Panels */
.workspace {
    flex: 1;
    min-height: 0;
    display: grid;
    grid-template-columns: 265fr 479fr 526fr;
    gap: 3px;
    padding: 0 3px;
}

.panel {
    --tab: #fff;
    display: flex;
    flex-direction: column;
    min-width: 0;
    min-height: 0;
    border: 1px solid #bcc0c6;
    border-radius: 6px 6px 0 0;
    background: #fff;
    overflow: hidden;
}

.builder {
    --tab: #f2f9ff;
}

.tabs {
    display: flex;
    height: 21px;
    flex-shrink: 0;
    background: #f6f7f7;
}

.tab {
    display: flex;
    align-items: center;
    gap: 2px;
    padding: 0 2px;
    border-right: 1px solid #b2b5b8;
    border-bottom: 1px solid #b2b5b8;
    border-radius: 0 6px 0 0;
    white-space: nowrap;
}

.tab.active {
    padding: 0 0 0 1px;
    border: none;
    border-radius: 0;
    background: var(--tab);
    position: relative;
    z-index: 1;
}

.tab + .tab {
    padding-left: 3px;
}

.curve {
    width: 30px;
    height: 21px;
    margin: 0 -8px;
}

.curve + .tab {
    padding-left: 0;
}

.curve + .strip {
    margin-left: 8px;
}

.strip {
    flex: 1;
    display: flex;
    justify-content: flex-end;
    padding: 3px 0;
    border-bottom: 1px solid #b2b5b8;
}

.panel .toolbar {
    flex-shrink: 0;
    padding: 0 2px;
    border-bottom: 1px solid #c8ccd4;
    background: #f8f8f8;
}

.panel .split {
    justify-content: space-between;
}

.builder .toolbar {
    background: linear-gradient(#e2f0fd, #e8f3fc);
}

/* Model tree */
.tree-area {
    flex: 1;
    min-height: 0;
    display: grid;
    grid-template: 1fr 20px / 1fr 19px;
}

.tree {
    min-width: 0;
    min-height: 0;
    margin: 0;
    padding: 0 0 0 16px;
    list-style: none;
    overflow: hidden;
}

.tree ul {
    margin: 0;
    padding-left: 13px;
    list-style: none;
}

.tree a {
    display: flex;
    align-items: center;
    width: max-content;
    height: 22px;
    color: #222;
    text-decoration: none;
    white-space: pre;
}

.tree a::before {
    content: "";
    width: 4px;
    height: 4px;
    margin: 0 4px 0 3px;
}

.tree .open::before {
    background: linear-gradient(135deg, transparent 50%, #bcc2c6 50%);
}

.tree .shut::before {
    border: 1px solid #e2e6e8;
    border-width: 1px 1px 0 0;
    transform: rotate(45deg);
}

.tree a svg {
    width: 12px;
    height: 12px;
    margin-right: 3px;
}

.tree .selected {
    padding-right: 2px;
    background: linear-gradient(90deg, transparent 10px, #f0f3f6 10px);
}

.scroll {
    display: flex;
    align-items: center;
    justify-content: space-between;
    background: #f0f1f2;
}

.scroll svg {
    width: 8px;
    height: 8px;
    fill: #333;
}

.scroll .thumb {
    border: 1px solid #a8aaae;
}

.vertical {
    flex-direction: column;
    gap: 24px;
    padding: 7px 0 6px;
}

.vertical .thumb {
    flex: 1;
    width: 18px;
    background:
        repeating-linear-gradient(#888 0 1px, transparent 1px 3px) center / 8px 8px no-repeat,
        linear-gradient(90deg, #f0f0f2, #d0d0d4);
}

.horizontal {
    grid-column: 1 / 3;
    padding: 0 28px 0 6px;
}

.horizontal .thumb {
    width: 158px;
    height: 18px;
    margin: 0 auto 0 7px;
    background:
        repeating-linear-gradient(90deg, #888 0 2px, transparent 2px 4px) center / 10px 8px no-repeat,
        linear-gradient(#f2f2f4, #cbccd2);
}

/* Player settings */
.settings {
    flex: 1;
    padding: 6px 5px 0 4px;
}

.settings h2 {
    display: flex;
    align-items: center;
    gap: 4px;
    height: 20px;
    margin: 0;
    padding-left: 4px;
    border: 1px solid #dce6ee;
    border-top-color: #ccd8e4;
    border-bottom: none;
    background: linear-gradient(#e4ebf4, #fff);
    border-radius: 2px 2px 0 0;
    color: #14305c;
    font-size: 13px;
    font-weight: 700;
}

.settings h2::before {
    content: "";
    width: 6px;
    border: 3px solid transparent;
    border-top-color: #999;
    border-bottom: none;
    margin-right: -1px;
}

.settings .collapsed::before {
    width: 3px;
    border: 3px solid transparent;
    border-left-color: #999;
    border-right: none;
    margin-right: 2px;
}

.row {
    display: grid;
    grid-template-columns: 120px 1fr;
    align-items: center;
    margin: 3px 6px 0 7px;
}

.settings h2 + .row {
    margin-top: 8px;
}

.settings .row:has(+ h2) {
    margin-bottom: 8px;
}

.row.wide {
    grid-template-columns: 130px 1fr auto;
}

.row.spaced {
    margin-top: 12px;
}

.row.scene {
    display: flex;
    gap: 3px;
}

.row.number {
    margin-top: 7px;
}

.row.time {
    margin-top: 8px;
}

.select {
    flex: 1;
    min-width: 0;
    position: relative;
}

.select::after {
    content: "";
    position: absolute;
    right: 6px;
    top: 11px;
    border: 4px solid transparent;
    border-top-color: #111;
    border-bottom: none;
    pointer-events: none;
}

select {
    display: block;
    width: 100%;
    height: 26px;
    padding: 0 2px;
    appearance: none;
    border: 1px solid #a4a6a8;
    border-radius: 1px;
    background: linear-gradient(#f2f2f2, #e8e8e8 50%, #d2d3d4);
}

input[type="text"] {
    width: 100%;
    min-width: 0;
    height: 25px;
    padding: 0 5px;
    border: 1px solid #e4e5e8;
    border-top-color: #c8cacc;
    background: #fff;
}

.clipped {
    text-indent: -5px;
}

.side {
    display: grid;
    place-items: center;
    width: 18px;
    height: 26px;
    border: 1px solid #b0b2b4;
    border-radius: 2px;
    background: linear-gradient(#f4f4f4, #d8dadb);
}

.wide .side {
    margin-left: 4px;
}

.side svg {
    width: 12px;
    height: 12px;
}

.slider {
    margin: 6px 15px 0 16px;
}

.ticks {
    width: calc(100% - 14px);
    height: 2px;
    margin: 0 7px;
    stroke: #b8babc;
    stroke-dasharray: 1 13;
}

.slider input {
    display: block;
    width: 100%;
    height: 28px;
    margin: 0;
    appearance: none;
    background: linear-gradient(#ccd0d2, #e8eeee) center / 100% 4px no-repeat;
}

.slider input::-webkit-slider-thumb {
    appearance: none;
    width: 14px;
    height: 26px;
    border: 1px solid #999;
    border-radius: 1px;
    background: linear-gradient(#f4f4f4, #d4d4d6);
}

.row.display {
    display: flex;
    gap: 4px;
    white-space: nowrap;
}

.display b {
    padding-right: 2px;
    font-size: 12px;
}

.check {
    display: flex;
    align-items: center;
    gap: 3px;
    margin: 5px 7px 6px;
}

.check input {
    appearance: none;
    width: 14px;
    height: 14px;
    margin: 0;
    border: 1px solid #a8aaac;
    background: linear-gradient(135deg, #d8dadc, #f8f8f8);
    box-shadow: inset 0 0 0 1px #f4f4f4;
}

/* Graphics */
.right {
    display: flex;
    flex-direction: column;
    gap: 3px;
    min-width: 0;
    min-height: 0;
}

.graphics {
    flex: 1;
}

.hovered {
    position: relative;
}

.toolbar .cursor {
    position: absolute;
    left: 8px;
    top: 2px;
    z-index: 2;
    width: 16px;
    height: 22px;
    fill: #fff;
    stroke: #666;
}

.canvas {
    flex: 1;
    min-height: 0;
    margin: 0 1px;
    background: linear-gradient(#8ad2ec, #98d0ec 18%, #a0d8ec 35%, #a6d6f0 46%, #aee2f4 47%, #b6def4 72%, #bcecf6 73%, #c6e8f2 94%, #cef4f6 96%);
}

.plot {
    width: 100%;
    height: 100%;
}

.edge {
    fill: none;
    stroke: #203030;
    stroke-width: 0.5px;
}

.plot-text {
    font: 14px "DejaVu Sans", sans-serif;
}

/* Progress */
.progress {
    height: 65px;
}

.progress .toolbar {
    padding-left: 7px;
}

.progress .group {
    margin-left: 5px;
}

.mini-caret {
    border: 2px solid transparent;
    border-top-color: #666;
    border-bottom: none;
}

/* Status bar */
.statusbar {
    display: flex;
    justify-content: flex-end;
    height: 19px;
    padding-right: 140px;
}

.statusbar span {
    padding: 0 5px;
    border: 1px solid #c4c6ca;
    border-width: 0 1px;
    line-height: 22px;
}
```
